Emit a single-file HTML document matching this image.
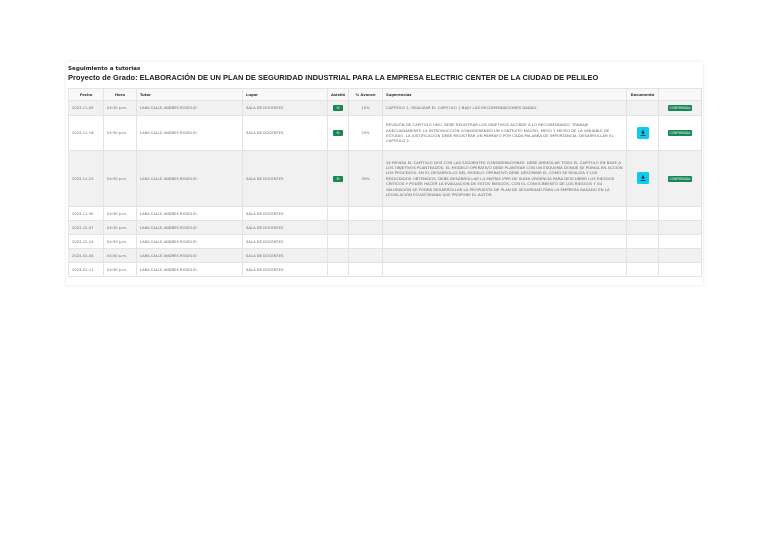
<!DOCTYPE html>
<html><head><meta charset="utf-8">
<style>
html,body{margin:0;padding:0;background:#fff;width:768px;height:543px;overflow:hidden;font-family:"DejaVu Sans","Liberation Sans",sans-serif;}
.card{position:absolute;left:66px;top:62px;width:637px;height:223px;background:#fff;box-shadow:0 0 3px rgba(0,0,0,.12);}
.sub{position:absolute;left:68px;top:66px;font-size:5.6px;color:#222;font-weight:bold;}
.title{position:absolute;left:68px;top:73px;font-family:"Liberation Sans",sans-serif;font-size:7.5px;color:#222;white-space:nowrap;font-weight:bold;}
table{position:absolute;left:68px;top:88px;border-collapse:collapse;table-layout:fixed;width:633px;font-size:3.7px;color:#666;}
td,th{border:0.5px solid #e3e3e3;padding:0 3px;vertical-align:middle;overflow:hidden;white-space:normal;}
th{height:11px;font-weight:bold;color:#333;font-size:3.7px;text-align:left;background:#f8f8f8;}
th.c,td.c{text-align:center;}
tr.s td{background:#f1f1f1;}
td{height:13px;}
.sg{line-height:5.4px;text-align:left;font-size:3.9px;}
.si{display:inline-block;background:#198754;color:#fff;font-size:3.3px;padding:1px 3px;border-radius:1px;}
.cf{display:inline-block;background:#198754;color:#fff;font-size:3.1px;padding:1px 2px;border-radius:1px;}
.dl{display:inline-block;width:12px;height:12px;background:#0dcaf0;border-radius:1.5px;position:relative;}
.dl svg{position:absolute;left:3px;top:3px;}
</style></head><body>
<div class="card"></div>
<div class="sub">Seguimiento a tutorias</div>
<div class="title">Proyecto de Grado: ELABORACIÓN DE UN PLAN DE SEGURIDAD INDUSTRIAL PARA LA EMPRESA ELECTRIC CENTER DE LA CIUDAD DE PELILEO</div>
<table>
<colgroup><col style="width:35px"><col style="width:33px"><col style="width:106px"><col style="width:85px"><col style="width:21px"><col style="width:34px"><col style="width:244px"><col style="width:32px"><col style="width:43px"></colgroup>
<tr><th class="c">Fecha</th><th class="c">Hora</th><th>Tutor</th><th>Lugar</th><th class="c">Asistió</th><th class="c">% Avance</th><th>Sugerencias</th><th class="c">Documento</th><th></th></tr>
<tr class="s"><td style="height:14px">2023-11-09</td><td>04:30 p.m.</td><td>LARA CALLE ANDRES ROGELIO</td><td>SALA DE DOCENTES</td><td class="c"><span class="si">SI</span></td><td class="c">10%</td><td class="sg">CAPITULO 1. REALIZAR EL CAPITULO 1 BAJO LAS RECOMENDACIONES DADAS.</td><td></td><td class="c"><span class="cf">CONFIRMADA</span></td></tr>
<tr><td style="height:34px">2023-11-16</td><td>04:30 p.m.</td><td>LARA CALLE ANDRES ROGELIO</td><td>SALA DE DOCENTES</td><td class="c"><span class="si">SI</span></td><td class="c">25%</td><td class="sg">REVISIÓN DE CAPITULO UNO. DEBE REGISTRAR LOS OBJETIVOS ACORDE A LO RECOMENDADO. TRABAJE ADECUADAMENTE LA INTRODUCCIÓN CONSIDERANDO UN CONTEXTO MACRO, MESO Y MICRO DE LA VARIABLE DE ESTUDIO. LA JUSTIFICACIÓN DEBE REGISTRAR UN PÁRRAFO POR CADA PALABRA DE IMPORTANCIA. DESARROLLAR EL CAPITULO 2.</td><td class="c"><span class="dl"><svg width="6" height="6" viewBox="0 0 6 6"><path d="M2.3 0.5h1.4v2h1.3L3 4.3 1 2.5h1.3z M0.5 5h5v0.8h-5z" fill="#222"/></svg></span></td><td class="c"><span class="cf">CONFIRMADA</span></td></tr>
<tr class="s"><td style="height:55px">2023-11-23</td><td>04:30 p.m.</td><td>LARA CALLE ANDRES ROGELIO</td><td>SALA DE DOCENTES</td><td class="c"><span class="si">SI</span></td><td class="c">35%</td><td class="sg">SE REVISA EL CAPITULO DOS CON LAS SIGUIENTES CONSIDERACIONES. DEBE ARREGLAR TODO EL CAPITULO EN BASE A LOS OBJETIVOS PLANTEADOS. EL MODELO OPERATIVO DEBE PLANTEAR CON UN ESQUEMA DONDE SE PONGA EN ACCIÓN LOS PROCESOS. EN EL DESARROLLO DEL MODELO OPERATIVO DEBE DESCRIBIR EL CÓMO SE REALIZA Y LOS RESULTADOS OBTENIDOS. DEBE DESARROLLAR LA MATRIZ IPER DE SUMA URGENCIA PARA DESCUBRIR LOS RIESGOS CRÍTICOS Y PODER HACER LA EVALUACIÓN DE ESTOS RIESGOS. CON EL CONOCIMIENTO DE LOS RIESGOS Y SU VALORACIÓN SE PODRÁ DESARROLLAR LA PROPUESTA DE PLAN DE SEGURIDAD PARA LA EMPRESA BASADO EN LA LEGISLACIÓN ECUATORIANA QUE PROPONE EL AUTOR.</td><td class="c"><span class="dl"><svg width="6" height="6" viewBox="0 0 6 6"><path d="M2.3 0.5h1.4v2h1.3L3 4.3 1 2.5h1.3z M0.5 5h5v0.8h-5z" fill="#222"/></svg></span></td><td class="c"><span class="cf">CONFIRMADA</span></td></tr>
<tr><td>2023-11-30</td><td>04:30 p.m.</td><td>LARA CALLE ANDRES ROGELIO</td><td>SALA DE DOCENTES</td><td></td><td></td><td></td><td></td><td></td></tr>
<tr class="s"><td>2023-12-07</td><td>04:30 p.m.</td><td>LARA CALLE ANDRES ROGELIO</td><td>SALA DE DOCENTES</td><td></td><td></td><td></td><td></td><td></td></tr>
<tr><td>2023-12-14</td><td>04:30 p.m.</td><td>LARA CALLE ANDRES ROGELIO</td><td>SALA DE DOCENTES</td><td></td><td></td><td></td><td></td><td></td></tr>
<tr class="s"><td>2024-01-04</td><td>04:30 p.m.</td><td>LARA CALLE ANDRES ROGELIO</td><td>SALA DE DOCENTES</td><td></td><td></td><td></td><td></td><td></td></tr>
<tr><td>2024-01-11</td><td>04:30 p.m.</td><td>LARA CALLE ANDRES ROGELIO</td><td>SALA DE DOCENTES</td><td></td><td></td><td></td><td></td><td></td></tr>
</table>
</body></html>
